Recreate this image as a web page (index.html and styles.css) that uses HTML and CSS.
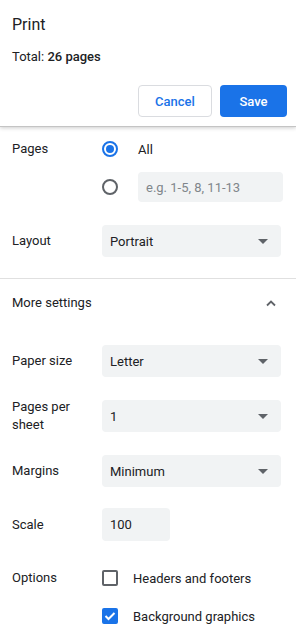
FILE: index.html
```html
<!DOCTYPE html>
<html lang="en">
<head>
  <meta charset="UTF-8">
  <meta name="viewport" content="width=device-width, initial-scale=1.0">
  <title>Print</title>
  <link rel="stylesheet" href="styles.css">
</head>
<body>
<div class="print-header">
  <h1 class="title">Print</h1>
  <div class="summary">Total: <b>26 pages</b></div>
  <div class="button-strip">
    <button class="btn cancel">Cancel</button>
    <button class="btn save">Save</button>
  </div>
</div>

<div class="settings">
  <div class="section pages">
    <div class="label">Pages</div>
    <div class="options">
      <div class="radio-row">
        <span class="radio checked"></span>
        <span class="radio-text">All</span>
      </div>
      <div class="radio-row">
        <span class="radio"></span>
        <input class="text-input" type="text" placeholder="e.g. 1-5, 8, 11-13">
      </div>
    </div>
  </div>

  <div class="section">
    <div class="label">Layout</div>
    <div class="select">Portrait<span class="arrow"></span></div>
  </div>

  <div class="divider"></div>

  <div class="more">
    <span>More settings</span>
    <svg class="chevron" width="12" height="8" viewBox="0 0 12 8"><path d="M2 6.5 L6 2.5 L10 6.5" fill="none" stroke="#5f6368" stroke-width="1.8"/></svg>
  </div>

  <div class="section">
    <div class="label">Paper size</div>
    <div class="select">Letter<span class="arrow"></span></div>
  </div>

  <div class="section">
    <div class="label">Pages per<br>sheet</div>
    <div class="select">1<span class="arrow"></span></div>
  </div>

  <div class="section">
    <div class="label">Margins</div>
    <div class="select">Minimum<span class="arrow"></span></div>
  </div>

  <div class="section">
    <div class="label">Scale</div>
    <div class="scale-box">100</div>
  </div>

  <div class="section options-section">
    <div class="label">Options</div>
    <div class="options">
      <div class="check-row">
        <span class="checkbox"></span>
        <span>Headers and footers</span>
      </div>
      <div class="check-row">
        <span class="checkbox checked">
          <svg width="12" height="10" viewBox="0 0 12 10"><path d="M1.5 5 L4.5 8 L10.5 2" fill="none" stroke="#fff" stroke-width="2"/></svg>
        </span>
        <span>Background graphics</span>
      </div>
    </div>
  </div>
</div>
</body>
</html>
```

FILE: styles.css
```css
body {
  margin: 0;
  font-family: Roboto, "Liberation Sans", Arial, sans-serif;
  font-size: 13px;
  color: #202124;
  background: #fff;
}
.print-header {
  padding: 14px 9px 9px 12px;
  border-bottom: 1px solid #c4c4c4;
  box-shadow: 0 1px 4px rgba(0,0,0,0.2);
}
.title {
  margin: 0;
  font-size: 16px;
  font-weight: normal;
  line-height: 22px;
}
.summary {
  margin-top: 12px;
  line-height: 18px;
}
.summary b {
  font-weight: 500;
}
.button-strip {
  display: flex;
  justify-content: flex-end;
  gap: 8px;
  margin-top: 19px;
}
.btn {
  height: 32px;
  border-radius: 4px;
  font-family: inherit;
  font-size: 13px;
  font-weight: 500;
  padding: 0;
}
.cancel {
  width: 74px;
  background: #fff;
  color: #1a73e8;
  border: 1px solid #dadce0;
}
.save {
  width: 67px;
  background: #1a73e8;
  color: #fff;
  border: none;
}
.settings {
  padding-top: 3px;
}
.section {
  display: flex;
  align-items: center;
  padding-left: 12px;
  margin-bottom: 21px;
}
.section .label {
  width: 90px;
  flex-shrink: 0;
  line-height: 18px;
}
.pages {
  align-items: flex-start;
  margin-bottom: 19px;
}
.pages .label {
  margin-top: 10px;
}
.options {
  flex: 1;
}
.radio-row {
  display: flex;
  align-items: center;
  height: 38px;
}
.radio {
  width: 16px;
  height: 16px;
  box-sizing: border-box;
  border: 2px solid #5f6368;
  border-radius: 50%;
  margin-right: 20px;
  position: relative;
}
.radio.checked {
  border-color: #1a73e8;
}
.radio.checked::after {
  content: "";
  position: absolute;
  left: 2px;
  top: 2px;
  width: 8px;
  height: 8px;
  border-radius: 50%;
  background: #1a73e8;
}
.text-input {
  width: 145px;
  height: 30px;
  box-sizing: border-box;
  border: none;
  border-radius: 4px;
  background: #f1f3f4;
  padding: 0 8px;
  font-family: inherit;
  font-size: 13px;
  color: #202124;
}
.text-input::placeholder {
  color: #80868b;
}
.select {
  width: 179px;
  height: 32px;
  box-sizing: border-box;
  background: #f1f3f4;
  border-radius: 4px;
  padding: 0 8px;
  display: flex;
  align-items: center;
  justify-content: space-between;
}
.arrow {
  width: 0;
  height: 0;
  border-left: 5px solid transparent;
  border-right: 5px solid transparent;
  border-top: 5px solid #5f6368;
  margin-right: 5px;
}
.divider {
  height: 1px;
  background: #e0e0e0;
  margin-top: 19px;
}
.more {
  display: flex;
  align-items: center;
  justify-content: space-between;
  height: 47px;
  padding: 0 19px 0 12px;
  margin-bottom: 19px;
}
.chevron {
  display: block;
}
.scale-box {
  width: 68px;
  height: 33px;
  box-sizing: border-box;
  background: #f1f3f4;
  border-radius: 4px;
  padding: 0 8px;
  display: flex;
  align-items: center;
}
.options-section {
  align-items: flex-start;
}
.options-section .label {
  margin-top: 7px;
}
.check-row {
  display: flex;
  align-items: center;
  height: 44px;
}
.check-row:first-child {
  height: 32px;
}
.checkbox {
  width: 16px;
  height: 16px;
  box-sizing: border-box;
  border: 2px solid #5f6368;
  border-radius: 2px;
  margin-right: 15px;
  display: flex;
  align-items: center;
  justify-content: center;
}
.checkbox.checked {
  background: #1a73e8;
  border-color: #1a73e8;
}
```
